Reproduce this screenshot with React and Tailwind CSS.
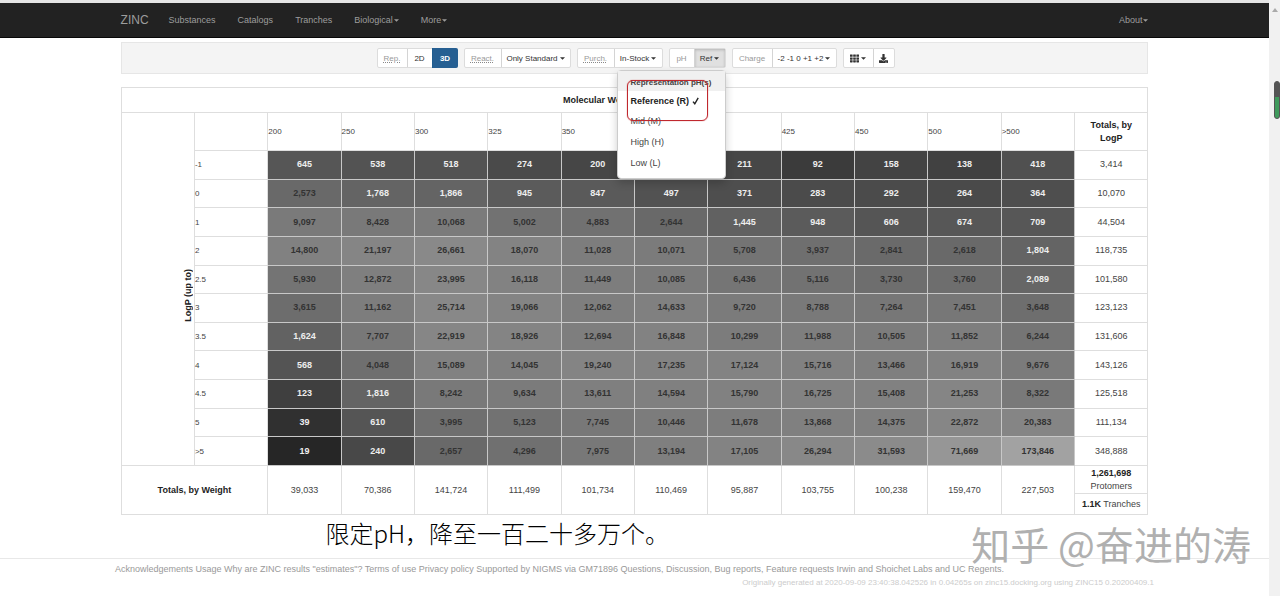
import React from "react";
import { FaTh, FaDownload } from "react-icons/fa";

const WEIGHTS = ["200", "250", "300", "325", "350", "375", "400", "425", "450", "500", ">500"];

const ROWS = [
  ["-1", [645, 538, 518, 274, 200, 222, 211, 92, 158, 138, 418], "3,414"],
  ["0", [2573, 1768, 1866, 945, 847, 497, 371, 283, 292, 264, 364], "10,070"],
  ["1", [9097, 8428, 10068, 5002, 4883, 2644, 1445, 948, 606, 674, 709], "44,504"],
  ["2", [14800, 21197, 26661, 18070, 11028, 10071, 5708, 3937, 2841, 2618, 1804], "118,735"],
  ["2.5", [5930, 12872, 23995, 16118, 11449, 10085, 6436, 5116, 3730, 3760, 2089], "101,580"],
  ["3", [3615, 11162, 25714, 19066, 12062, 14633, 9720, 8788, 7264, 7451, 3648], "123,123"],
  ["3.5", [1624, 7707, 22919, 18926, 12694, 16848, 10299, 11988, 10505, 11852, 6244], "131,606"],
  ["4", [568, 4048, 15089, 14045, 19240, 17235, 17124, 15716, 13466, 16919, 9676], "143,126"],
  ["4.5", [123, 1816, 8242, 9634, 13611, 14594, 15790, 16725, 15408, 21253, 8322], "125,518"],
  ["5", [39, 610, 3995, 5123, 7745, 10446, 11678, 13868, 14375, 22872, 20383], "111,134"],
  [">5", [19, 240, 2657, 4296, 7975, 13194, 17105, 26294, 31593, 71669, 173846], "348,888"],
];

const WEIGHT_TOTALS = [
  "39,033", "70,386", "141,724", "111,499", "101,734", "110,469",
  "95,887", "103,755", "100,238", "159,470", "227,503",
];

// Cell shade grows with the logarithm of the count.
function shade(count) {
  const g = Math.round(38 + 13.6 * (Math.log(count) - Math.log(19)));
  return `rgb(${g}, ${g}, ${g})`;
}

function Caret() {
  return (
    <svg viewBox="0 0 6 3" className="h-[3px] w-[5px] shrink-0" aria-hidden="true">
      <path d="M0 0h6L3 3z" fill="currentColor" />
    </svg>
  );
}

function NavLink({ children, caret }) {
  return (
    <a href="#" className="flex items-center gap-px px-[11px] hover:text-white">
      {children}
      {caret && <Caret />}
    </a>
  );
}

function Group({ label, dotted, labelWidth, children }) {
  return (
    <div className="relative flex h-5 rounded-xs border border-[#dcdcdc] bg-white">
      {label && (
        <span className={`flex items-center justify-center text-[#999] ${labelWidth}`}>
          <span className={dotted ? "underline decoration-[#888] decoration-dotted underline-offset-1" : ""}>{label}</span>
        </span>
      )}
      {children}
    </div>
  );
}

function Btn({ className = "", children, ...rest }) {
  return (
    <button
      type="button"
      className={`flex items-center justify-center gap-[2px] whitespace-nowrap border-l border-[#d4d4d4] first:border-l-0 ${className}`}
      {...rest}
    >
      {children}
    </button>
  );
}

function PhMenu() {
  return (
    <div className="absolute -right-px top-[21px] z-10 w-[109px] rounded-sm border border-[#ccc] bg-white pb-1 text-[9px] text-[#444] shadow-[0_4px_8px_rgba(0,0,0,0.2)]">
      <div className="flex h-5 items-center bg-[#f0f0f0] pl-[13px] pt-[2px] text-[8px] font-bold text-[#444]">
        Representation pH(s)
      </div>
      <div>
        <button type="button" className="flex h-5 w-full items-center gap-[3px] whitespace-nowrap pl-[13px] font-bold text-[#222]">
          Reference (R)
          <svg viewBox="0 0 8 8" className="h-2 w-2" aria-hidden="true">
            <path d="M1 4.6 2.8 6.8 6.2 0.8" fill="none" stroke="currentColor" strokeWidth="1.4" />
          </svg>
        </button>
        {["Mid (M)", "High (H)", "Low (L)"].map((t) => (
          <button key={t} type="button" className="flex h-[21px] w-full items-center pl-[13px]">
            {t}
          </button>
        ))}
      </div>
      <div className="pointer-events-none absolute left-[9px] top-[9px] h-[41px] w-[81px] rounded-md border border-[#c0282e] shadow-[0_0_1px_#c0282e]" />
    </div>
  );
}

function Toolbar() {
  return (
    <div className="flex justify-center gap-[6px] border border-[#e6e6e6] bg-[#f4f4f4] py-[5px] pl-[2px] text-[8px] text-[#333]">
      <Group label="Rep." dotted labelWidth="w-[29px]">
        <Btn className="w-[25px]">2D</Btn>
        <Btn className="-my-px -mr-px w-[26px] rounded-r-xs !border-[#1f5c8f] bg-[#265f92] font-bold text-white">3D</Btn>
      </Group>
      <Group label="React." dotted labelWidth="w-[36px]">
        <Btn className="w-[69px]">Only Standard<Caret /></Btn>
      </Group>
      <Group label="Purch." dotted labelWidth="w-[36px]">
        <Btn className="w-[48px]">In-Stock<Caret /></Btn>
      </Group>
      <Group label="pH" labelWidth="w-[24px]">
        <Btn className="w-[31px] bg-[#e0e0e0] shadow-[inset_0_1px_3px_rgba(0,0,0,0.2)]" aria-expanded="true">
          Ref<Caret />
        </Btn>
        <PhMenu />
      </Group>
      <Group label="Charge" labelWidth="w-[39px]">
        <Btn className="w-[64px]">-2 -1 0 +1 +2<Caret /></Btn>
      </Group>
      <Group>
        <Btn className="w-[29px]" aria-label="Grid">
          <FaTh className="h-[9px] w-[9px]" />
          <Caret />
        </Btn>
        <Btn className="w-[21px]" aria-label="Download">
          <FaDownload className="h-[9px] w-[9px]" />
        </Btn>
      </Group>
    </div>
  );
}

function TrancheTable() {
  const line = "border border-[#dedede]";
  return (
    <table className="mt-[13px] h-[428px] w-full table-fixed border-collapse text-center text-[#444]">
      <tbody>
        <tr className="h-[25px]">
          <th colSpan={14} className={`${line} text-[#222]`}>Molecular Weight (up to, Daltons)</th>
        </tr>
        <tr className="h-[38px]">
          <th rowSpan={12} className={`${line} text-[#222]`}>
            <div className="flex justify-end pt-3">
              <span className="rotate-180 whitespace-nowrap leading-[12px] [writing-mode:vertical-rl]">LogP (up to)</span>
            </div>
          </th>
          <td className={line} />
          {WEIGHTS.map((w) => (
            <th key={w} scope="col" className={`${line} text-left text-[8px] font-normal`}>{w}</th>
          ))}
          <th scope="col" className={`${line} px-3 text-[#222]`}>Totals, by LogP</th>
        </tr>
        {ROWS.map(([logp, counts, total]) => (
          <tr key={logp}>
            <th scope="row" className={`${line} text-left text-[8px] font-normal`}>{logp}</th>
            {counts.map((c, i) => (
              <td
                key={i}
                className={`border border-[#c8c8c8] font-bold ${c < 2500 ? "text-[#eee]" : "text-[#333]"}`}
                style={{ backgroundColor: shade(c) }}
              >
                {c.toLocaleString("en-US")}
              </td>
            ))}
            <td className={line}>{total}</td>
          </tr>
        ))}
        <tr className="h-[28px]">
          <th colSpan={2} rowSpan={2} className={`${line} text-[#222]`}>Totals, by Weight</th>
          {WEIGHT_TOTALS.map((t) => (
            <td key={t} rowSpan={2} className={line}>{t}</td>
          ))}
          <td className={line}><b className="block text-[#222]">1,261,698</b>Protomers</td>
        </tr>
        <tr className="h-[21px]">
          <td className={line}><b className="text-[#222]">1.1K</b> Tranches</td>
        </tr>
      </tbody>
    </table>
  );
}

export default function App() {
  return (
    <div className="flex min-h-screen bg-white font-['Liberation_Sans',Arial,sans-serif] text-[9px] leading-[13px]">
      <div className="relative flex min-w-0 flex-1 flex-col">
        <nav className="border-b border-t-[3px] border-b-[#080808] border-t-[#e5e5e5] bg-[#222] text-[#9d9d9d]">
          <div className="mx-auto flex h-[34px] w-[81%] items-center">
            <a href="#" className="mr-[9px] text-[12px]">ZINC</a>
            <NavLink>Substances</NavLink>
            <NavLink>Catalogs</NavLink>
            <NavLink>Tranches</NavLink>
            <NavLink caret>Biological</NavLink>
            <NavLink caret>More</NavLink>
            <div className="ml-auto -mr-[11px]">
              <NavLink caret>About</NavLink>
            </div>
          </div>
        </nav>
        <main className="mx-auto mt-1 w-[81%]">
          <Toolbar />
          <TrancheTable />
          <p lang="zh-CN" className="pl-[205px] pt-[2px] font-['Noto_Sans_CJK_SC',sans-serif] text-[24px] font-light leading-[32px] text-black">
            {"限定pH\uFF0C降至一百二十多万个。"}
          </p>
        </main>
        <footer className="mt-[9px] border-t border-[#e8e8e8] px-[115px] pt-1 text-[#999]">
          <p>
            Acknowledgements Usage Why are ZINC results "estimates"? Terms of use Privacy policy Supported by NIGMS via
            GM71896 Questions, Discussion, Bug reports, Feature requests Irwin and Shoichet Labs and UC Regents.
          </p>
          <p className="text-right text-[8px] text-[#ccc]">
            Originally generated at 2020-09-09 23:40:38.042526 in 0.04265s on zinc15.docking.org using ZINC15 0.20200409.1
          </p>
        </footer>
        <div className="pointer-events-none absolute bottom-[29px] right-[18px] whitespace-nowrap font-['Noto_Sans_CJK_SC',sans-serif] text-[39px] leading-[48px] text-[#b0b0b0] [text-shadow:-1px_-1px_0_#fff]">
          知乎 @奋进的涛
        </div>
      </div>
      <div className="flex w-[11px] shrink-0 flex-col items-end bg-[#f1f1f1] pt-2" aria-hidden="true">
        <svg viewBox="0 0 6 4" className="mr-[2px] h-1 w-[6px]">
          <path d="M0 4h6L3 0z" fill="#aaa" />
        </svg>
        <div className="mt-[69px] flex h-[38px] w-[6px] flex-col overflow-hidden rounded-full border border-[#555] bg-[#555]">
          <div className="mt-auto h-[21px] bg-[#3f9a5c]" />
        </div>
      </div>
    </div>
  );
}
